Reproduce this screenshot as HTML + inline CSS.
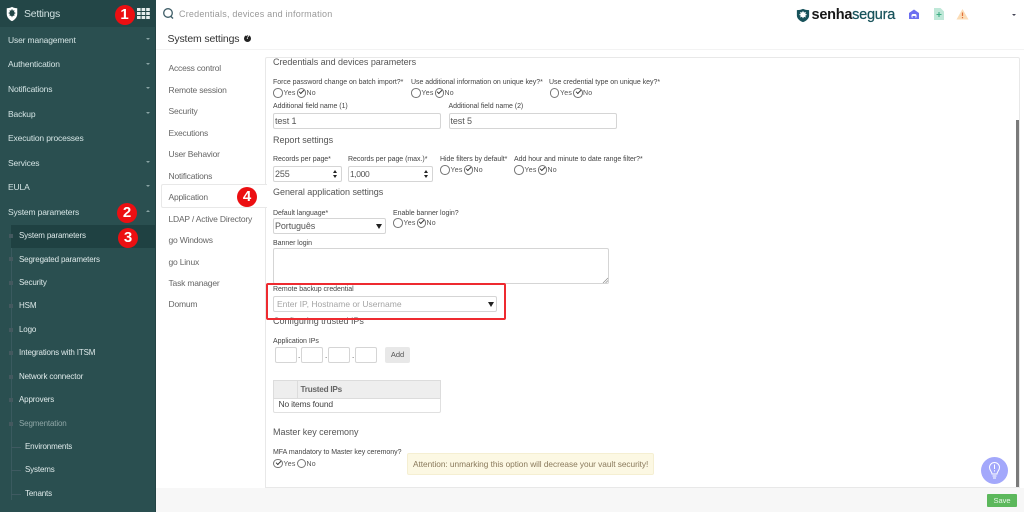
<!DOCTYPE html>
<html><head><meta charset="utf-8"><style>
html,body{margin:0;padding:0;width:1024px;height:512px;overflow:hidden;background:#fff}
body{position:relative;font-family:"Liberation Sans",sans-serif;color:#444}
.a,.t,.s,.m,.h,.l,.r,.i{position:absolute}
.t,.s,.m,.h,.l{white-space:nowrap}
.s{left:8px;color:#d4e4e4;font-size:8.5px;letter-spacing:-.15px;line-height:12px}
.s.c{left:19px;color:#dfeaea;font-size:8px;letter-spacing:-.15px}
.s.d{left:25px;color:#dfeaea;font-size:8px;letter-spacing:-.15px}
.m{left:168.5px;color:#666;font-size:8.5px;letter-spacing:-.2px;line-height:12px}
.h{left:273px;color:#555;font-size:9px;letter-spacing:-.03px;line-height:12px}
.l{color:#444;font-size:7px;letter-spacing:-.03px;line-height:10px}
.r{color:#555;font-size:7px;line-height:10px;letter-spacing:.2px;margin-top:1px}
.o{position:absolute;width:7.5px;height:7.5px;border:.8px solid #777;border-radius:50%;background:#fff;box-sizing:content-box}
.o.k:after{content:"";position:absolute;left:1.6px;top:1px;width:3.6px;height:1.8px;border-left:1.2px solid #333;border-bottom:1.2px solid #333;transform:rotate(-45deg)}
.i{border:1px solid #d5d5d5;border-radius:2px;background:#fff;box-sizing:border-box;color:#555;font-size:9px;letter-spacing:-.1px;padding-left:1px}
.b{position:absolute;width:20px;height:20px;border-radius:50%;background:#ec0f12;color:#fff;font-weight:bold;font-size:15px;line-height:20px;text-align:center}
.dot{position:absolute;left:8.5px;width:4px;height:4px;background:#44595f}
.car{position:absolute;left:146px;width:0;height:0;border-left:2.5px solid transparent;border-right:2.5px solid transparent;border-top:2.5px solid #8aa5a5}
.tri{position:absolute;width:0;height:0;border-left:3px solid transparent;border-right:3px solid transparent;border-top:5px solid #222}
.sp{position:absolute;width:0;height:0;border-left:2px solid transparent;border-right:2px solid transparent}
</style></head><body>

<!-- Sidebar -->
<div class="a" style="left:0;top:0;width:156px;height:512px;background:#2a4f50;border-right:1px solid #234344;box-sizing:border-box"></div>
<div class="a" style="left:0;top:0;width:156px;height:27px;background:#234647"></div>
<svg class="a" style="left:6px;top:6px" width="12" height="16" viewBox="0 0 16 18" preserveAspectRatio="none"><path d="M8 1C10 2 12.500 2.500 15 2.500V9C15 13 11 16 8 17C5 16 1 13 1 9V2.500C3.500 2.500 6 2 8 1Z" fill="#fff"/><circle cx="8" cy="8" r="3.400" fill="#234647"/><path d="M8 3.500V12.500M3.500 8H12.500M5 5L11 11M11 5L5 11" stroke="#234647" stroke-width="1"/></svg>
<div class="t" style="left:24px;top:7px;color:#cfe0e0;font-size:10.500px;letter-spacing:-.25px;line-height:14px">Settings</div>
<div class="b" style="left:114.500px;top:5px">1</div>
<svg class="a" style="left:137px;top:8px" width="13" height="11"><g fill="#e6eeee"><rect x="0" y="0" width="3.600" height="3"/><rect x="4.600" y="0" width="3.600" height="3"/><rect x="9.200" y="0" width="3.600" height="3"/><rect x="0" y="4" width="3.600" height="3"/><rect x="4.600" y="4" width="3.600" height="3"/><rect x="9.200" y="4" width="3.600" height="3"/><rect x="0" y="8" width="3.600" height="3"/><rect x="4.600" y="8" width="3.600" height="3"/><rect x="9.200" y="8" width="3.600" height="3"/></g></svg>

<div class="s" style="top:34px">User management</div><div class="car" style="top:38px"></div>
<div class="s" style="top:58px">Authentication</div><div class="car" style="top:63px"></div>
<div class="s" style="top:83px">Notifications</div><div class="car" style="top:87px"></div>
<div class="s" style="top:107.500px">Backup</div><div class="car" style="top:112px"></div>
<div class="s" style="top:132px">Execution processes</div>
<div class="s" style="top:156.500px">Services</div><div class="car" style="top:161px"></div>
<div class="s" style="top:181px">EULA</div><div class="car" style="top:185px"></div>
<div class="s" style="top:205.500px">System parameters</div>
<div class="car" style="top:210px;border-top:0;border-bottom:2.500px solid #8aa5a5"></div>
<div class="b" style="left:117px;top:203px">2</div>

<div class="a" style="left:10.500px;top:225px;width:1px;height:275px;background:#3a5a5f"></div>
<div class="a" style="left:11px;top:225px;width:144px;height:23px;background:#1f4142"></div>
<div class="b" style="left:118px;top:228px">3</div>
<div class="dot" style="top:234px"></div><div class="s c" style="top:230px">System parameters</div>
<div class="dot" style="top:257px"></div><div class="s c" style="top:253.500px">Segregated parameters</div>
<div class="dot" style="top:281px"></div><div class="s c" style="top:277px">Security</div>
<div class="dot" style="top:304px"></div><div class="s c" style="top:300px">HSM</div>
<div class="dot" style="top:327.500px"></div><div class="s c" style="top:323.500px">Logo</div>
<div class="dot" style="top:351px"></div><div class="s c" style="top:347px">Integrations with ITSM</div>
<div class="dot" style="top:375px"></div><div class="s c" style="top:371px">Network connector</div>
<div class="dot" style="top:398px"></div><div class="s c" style="top:394px">Approvers</div>
<div class="dot" style="top:421.500px"></div><div class="s c" style="top:417.500px;color:#8ea6a6">Segmentation</div>
<div class="a" style="left:11px;top:447px;width:10px;height:1px;background:#3f5a61"></div><div class="s d" style="top:441px">Environments</div>
<div class="a" style="left:11px;top:470px;width:10px;height:1px;background:#3f5a61"></div><div class="s d" style="top:464px">Systems</div>
<div class="a" style="left:11px;top:494px;width:10px;height:1px;background:#3f5a61"></div><div class="s d" style="top:488px">Tenants</div>

<!-- Top bar -->
<svg class="a" style="left:162px;top:7px" width="13" height="13" fill="none" stroke="#3d5c66" stroke-width="1.300"><circle cx="6" cy="6" r="4.300"/><path d="M9 9.500L11 11.500"/></svg>
<div class="t" style="left:179px;top:8px;color:#999;font-size:9px;letter-spacing:.22px;line-height:12px">Credentials, devices and information</div>
<svg class="a" style="left:796px;top:8px" width="14" height="15" viewBox="0 0 16 18" preserveAspectRatio="none"><path d="M8 1C10 2 12.500 2.500 15 2.500V9C15 13 11 16 8 17C5 16 1 13 1 9V2.500C3.500 2.500 6 2 8 1Z" fill="#17525a"/><circle cx="8" cy="8" r="3.200" fill="#fff"/><path d="M8 3.800V12.200M3.800 8H12.200M5 5L11 11M11 5L5 11" stroke="#fff" stroke-width="1"/></svg>
<div class="t" style="left:811.500px;top:6px;font-size:14.500px;font-weight:bold;line-height:18px;color:#181818;letter-spacing:-.25px">senha<span style="color:#17525a;font-weight:normal;-webkit-text-stroke:.25px #17525a">segura</span></div>
<svg class="a" style="left:908px;top:8px" width="12" height="12"><path d="M1 5L6 1.500L11 5V11H1Z" fill="#6c6ff0"/><rect x="3.500" y="6" width="5" height="4" rx="1.500" fill="#fff"/><rect x="4.500" y="8" width="3" height="3" fill="#6c6ff0"/></svg>
<svg class="a" style="left:934px;top:8px" width="10" height="12"><path d="M0 0H6.500L10 3.500V12H0Z" fill="#bfe8d8"/><path d="M5 4V9M2.500 6.500H7.500" stroke="#3fae84" stroke-width="1.100"/></svg>
<svg class="a" style="left:956px;top:8px" width="13" height="12"><path d="M6.500 1L12.500 11.500H.5Z" fill="#fbdcb6"/><path d="M6.500 4.500V8M6.500 9V10.300" stroke="#e2703a" stroke-width="1.200"/></svg>
<div class="a" style="left:1012px;top:14px;width:0;height:0;border-left:2.500px solid transparent;border-right:2.500px solid transparent;border-top:2.500px solid #445"></div>

<!-- Title -->
<div class="t" style="left:167.500px;top:32px;color:#333;font-size:10.500px;letter-spacing:-.15px;line-height:14px">System settings</div>
<div class="a" style="left:244px;top:35px;width:7px;height:7px;border-radius:50%;background:#222;color:#fff;font-size:6px;font-weight:bold;line-height:7px;text-align:center">?</div>
<div class="a" style="left:156px;top:49px;width:868px;height:1px;background:#f3f3f3"></div>

<!-- Tabs -->
<div class="m" style="top:62px">Access control</div>
<div class="m" style="top:83.500px">Remote session</div>
<div class="m" style="top:105px">Security</div>
<div class="m" style="top:126.500px">Executions</div>
<div class="m" style="top:148px">User Behavior</div>
<div class="m" style="top:169.500px">Notifications</div>

<!-- Panel -->
<div class="a" style="left:265px;top:57px;width:755px;height:431px;border:1px solid #e8e8e8;box-sizing:border-box;border-radius:2px 2px 0 0;background:#fff"></div>
<div class="a" style="left:161px;top:184px;width:106px;height:24px;background:#fff;border:1px solid #e8e8e8;border-right:0;box-sizing:border-box;border-radius:2px 0 0 2px"></div>
<div class="m" style="top:191px">Application</div>
<div class="b" style="left:237px;top:187px">4</div>
<div class="m" style="top:212.500px">LDAP / Active Directory</div>
<div class="m" style="top:234px">go Windows</div>
<div class="m" style="top:255.500px">go Linux</div>
<div class="m" style="top:277px">Task manager</div>
<div class="m" style="top:298px">Domum</div>

<!-- Scrollbar -->
<div class="a" style="left:1016px;top:120px;width:3px;height:367px;background:#7a7a7a"></div>

<!-- Section 1 -->
<div class="h" style="top:56px">Credentials and devices parameters</div>
<div class="l" style="left:273px;top:78px">Force password change on batch import?*</div>
<div class="l" style="left:411px;top:78px">Use additional information on unique key?*</div>
<div class="l" style="left:549px;top:78px">Use credential type on unique key?*</div>

<div class="o" style="left:273px;top:88px"></div><div class="r" style="left:283.500px;top:88px">Yes</div><div class="o k" style="left:296.500px;top:88px"></div><div class="r" style="left:306.500px;top:88px">No</div>
<div class="o" style="left:411px;top:88px"></div><div class="r" style="left:421.500px;top:88px">Yes</div><div class="o k" style="left:434.500px;top:88px"></div><div class="r" style="left:444.500px;top:88px">No</div>
<div class="o" style="left:549.500px;top:88px"></div><div class="r" style="left:560px;top:88px">Yes</div><div class="o k" style="left:573px;top:88px"></div><div class="r" style="left:583px;top:88px">No</div>

<div class="l" style="left:273px;top:102px">Additional field name (1)</div>
<div class="l" style="left:448.500px;top:102px">Additional field name (2)</div>
<div class="i" style="left:273px;top:113px;width:168px;height:16px;line-height:14px">test 1</div>
<div class="i" style="left:448.500px;top:113px;width:168px;height:16px;line-height:14px">test 5</div>

<div class="h" style="top:133.500px">Report settings</div>
<div class="l" style="left:273px;top:155px">Records per page*</div>
<div class="l" style="left:348px;top:155px">Records per page (max.)*</div>
<div class="l" style="left:440px;top:155px">Hide filters by default*</div>
<div class="l" style="left:514px;top:155px">Add hour and minute to date range filter?*</div>
<div class="i" style="left:273px;top:166px;width:69px;height:16px;line-height:14px">255</div>
<div class="sp" style="left:332.500px;top:170px;border-bottom:3px solid #222"></div><div class="sp" style="left:332.500px;top:175px;border-top:3px solid #222"></div>
<div class="i" style="left:348px;top:166px;width:85px;height:16px;line-height:14px;font-size:8.500px;letter-spacing:-.4px">1,000</div>
<div class="sp" style="left:423.500px;top:170px;border-bottom:3px solid #222"></div><div class="sp" style="left:423.500px;top:175px;border-top:3px solid #222"></div>
<div class="o" style="left:440px;top:165px"></div><div class="r" style="left:450.500px;top:165px">Yes</div><div class="o k" style="left:463.500px;top:165px"></div><div class="r" style="left:473.500px;top:165px">No</div>
<div class="o" style="left:514px;top:165px"></div><div class="r" style="left:524.500px;top:165px">Yes</div><div class="o k" style="left:537.500px;top:165px"></div><div class="r" style="left:547.500px;top:165px">No</div>

<div class="h" style="top:186px">General application settings</div>
<div class="l" style="left:273px;top:208.500px">Default language*</div>
<div class="l" style="left:393px;top:208.500px">Enable banner login?</div>
<div class="i" style="left:273px;top:218px;width:113px;height:16px;line-height:14px">Português</div>
<div class="tri" style="left:375.500px;top:224px"></div>
<div class="o" style="left:393px;top:218px"></div><div class="r" style="left:403.500px;top:218px">Yes</div><div class="o k" style="left:416.500px;top:218px"></div><div class="r" style="left:426.500px;top:218px">No</div>
<div class="l" style="left:273px;top:238.500px">Banner login</div>
<div class="i" style="left:273px;top:248px;width:336px;height:36px"></div>
<svg class="a" style="left:602px;top:277px" width="6" height="6" stroke="#888" stroke-width=".7"><path d="M1 6L6 1M3.500 6L6 3.500"/></svg>

<div class="l" style="left:273px;top:285px">Remote backup credential</div>
<div class="i" style="left:273px;top:296px;width:224px;height:16px;line-height:14px;color:#a5a5a5;padding-left:3px;font-size:8.500px;letter-spacing:0">Enter IP, Hostname or Username</div>
<div class="tri" style="left:487.500px;top:302px"></div>

<div class="h" style="top:315px">Configuring trusted IPs</div>
<!-- Red highlight -->
<div class="a" style="left:266px;top:282.500px;width:240px;height:37px;border:2px solid #ee2a30;box-sizing:border-box;border-radius:2px"></div>

<div class="l" style="left:273px;top:337px">Application IPs</div>
<div class="i" style="left:274.500px;top:347px;width:22px;height:16px"></div>
<div class="i" style="left:301px;top:347px;width:22px;height:16px"></div>
<div class="i" style="left:328px;top:347px;width:22px;height:16px"></div>
<div class="i" style="left:355px;top:347px;width:22px;height:16px"></div>
<div class="t" style="left:298px;top:351px;font-size:8px;line-height:10px">.</div>
<div class="t" style="left:325px;top:351px;font-size:8px;line-height:10px">.</div>
<div class="t" style="left:352px;top:351px;font-size:8px;line-height:10px">.</div>
<div class="a" style="left:385px;top:347px;width:25px;height:16px;background:#e8e8e8;border-radius:2px;color:#555;font-size:7.500px;line-height:16px;text-align:center">Add</div>

<div class="a" style="left:273px;top:380px;width:168px;height:33px;border:1px solid #e0e0e0;box-sizing:border-box;border-radius:2px"></div>
<div class="a" style="left:273px;top:380px;width:168px;height:19px;background:#eeeeee;border:1px solid #dcdcdc;box-sizing:border-box"></div>
<div class="a" style="left:297px;top:380px;width:1px;height:19px;background:#dcdcdc"></div>
<div class="t" style="left:300.500px;top:384px;font-size:8.200px;font-weight:bold;color:#666;letter-spacing:-.25px;line-height:11px">Trusted IPs</div>
<div class="t" style="left:278.500px;top:398.500px;font-size:8.500px;color:#444;letter-spacing:-.2px;line-height:11px">No items found</div>

<div class="h" style="top:426px">Master key ceremony</div>
<div class="l" style="left:273px;top:448px">MFA mandatory to Master key ceremony?</div>
<div class="o k" style="left:273px;top:458.500px"></div><div class="r" style="left:283.500px;top:458.500px">Yes</div><div class="o" style="left:296.500px;top:458.500px"></div><div class="r" style="left:306.500px;top:458.500px">No</div>
<div class="a" style="left:407px;top:453px;width:247px;height:22px;background:#fcf8e3;border:1px solid #f5efd2;box-sizing:border-box;border-radius:2px;color:#8a7a5c;font-size:8.300px;letter-spacing:-.04px;line-height:20px;padding-left:5px;white-space:nowrap">Attention: unmarking this option will decrease your vault security!</div>

<!-- Lightbulb -->
<div class="a" style="left:981px;top:457px;width:27px;height:27px;border-radius:50%;background:#a3a8fb"></div>
<svg class="a" style="left:987px;top:461px" width="15" height="19" fill="none" stroke="#fff" stroke-width="1"><path d="M5 13C5 10.500 2.500 9.500 2.500 6.500A5 5 0 0 1 12.500 6.500C12.500 9.500 10 10.500 10 13Z"/><path d="M5.500 15H9.500M6 17H9M7.500 3.500V8M7.500 9.200V10.500"/></svg>

<!-- Footer -->
<div class="a" style="left:156px;top:488px;width:868px;height:24px;background:#f7f7f7"></div>
<div class="a" style="left:987px;top:494px;width:30px;height:13px;background:#5cb85c;color:#e9f6e9;font-size:7.500px;line-height:13px;text-align:center;border-radius:1px">Save</div>
</body></html>
